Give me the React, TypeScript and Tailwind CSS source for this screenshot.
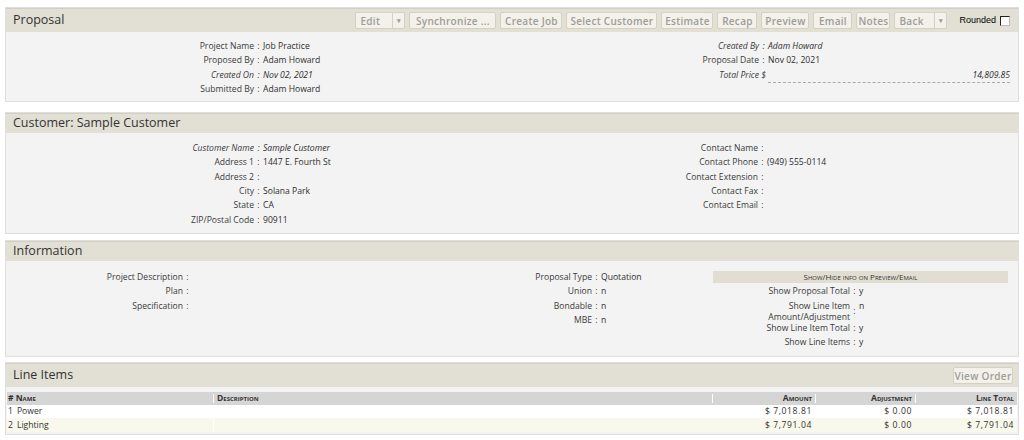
import React from "react";

type Row = { label: string; value?: string; italic?: boolean };

function Field({
  row,
  labelClass,
  rowClass = "h-[14.5px]",
}: {
  row: Row;
  labelClass: string;
  rowClass?: string;
}) {
  return (
    <div className={`flex items-center ${rowClass} ${row.italic ? "italic" : ""}`}>
      <span className={`shrink-0 text-right text-[#3a3a3a] ${labelClass}`}>{row.label}</span>
      <span className="w-[9px] shrink-0 text-center text-[#3a3a3a]">:</span>
      <span className="text-[#2e2e2e]">{row.value}</span>
    </div>
  );
}

function Btn({ label, w, arrow }: { label: string; w: string; arrow?: boolean }) {
  return (
    <div
      className={`flex h-[17px] shrink-0 items-center rounded-[2px] border border-[#d4d1c3] bg-[#f3f1e9] text-[10px] font-semibold tracking-[0.3px] text-[#9d9d99] ${w}`}
    >
      {arrow ? (
        <>
          <span className="flex-1 pl-[4px]">{label}</span>
          <span className="flex h-full w-[12px] items-center justify-center border-l border-[#d4d1c3] text-[7px]">
            ▾
          </span>
        </>
      ) : (
        <span className="w-full text-center">{label}</span>
      )}
    </div>
  );
}

function Panel({
  title,
  headerClass,
  right,
  children,
  className = "",
}: {
  title: string;
  headerClass: string;
  right?: React.ReactNode;
  children: React.ReactNode;
  className?: string;
}) {
  return (
    <div className={`mx-[5px] border border-[#dedede] bg-[#f3f3f3] ${className}`}>
      <div className={`flex items-center border-t border-[#d2d0c4] bg-[#e2e0d4] pl-[7px] ${headerClass}`}>
        <span className="text-[12.5px] text-[#333]">{title}</span>
        {right}
      </div>
      {children}
    </div>
  );
}

export default function App() {
  const proposalLeft: Row[] = [
    { label: "Project Name", value: "Job Practice" },
    { label: "Proposed By", value: "Adam Howard" },
    { label: "Created On", value: "Nov 02, 2021", italic: true },
    { label: "Submitted By", value: "Adam Howard" },
  ];
  const proposalRight: Row[] = [
    { label: "Created By", value: "Adam Howard", italic: true },
    { label: "Proposal Date", value: "Nov 02, 2021" },
  ];
  const customerLeft: Row[] = [
    { label: "Customer Name", value: "Sample Customer", italic: true },
    { label: "Address 1", value: "1447 E. Fourth St" },
    { label: "Address 2", value: "" },
    { label: "City", value: "Solana Park" },
    { label: "State", value: "CA" },
    { label: "ZIP/Postal Code", value: "90911" },
  ];
  const customerRight: Row[] = [
    { label: "Contact Name", value: "" },
    { label: "Contact Phone", value: "(949) 555-0114" },
    { label: "Contact Extension", value: "" },
    { label: "Contact Fax", value: "" },
    { label: "Contact Email", value: "" },
  ];
  const infoLeft: Row[] = [
    { label: "Project Description" },
    { label: "Plan" },
    { label: "Specification" },
  ];
  const infoMid: Row[] = [
    { label: "Proposal Type", value: "Quotation" },
    { label: "Union", value: "n" },
    { label: "Bondable", value: "n" },
    { label: "MBE", value: "n" },
  ];
  const items = [
    { n: 1, name: "Power", amount: "$ 7,018.81", adj: "$ 0.00", total: "$ 7,018.81" },
    { n: 2, name: "Lighting", amount: "$ 7,791.04", adj: "$ 0.00", total: "$ 7,791.04" },
  ];

  return (
    <div className="h-[440px] w-[1024px] overflow-hidden bg-white pt-[7px] font-['Open_Sans',sans-serif] text-[8.6px] leading-none">
      <Panel
        title="Proposal"
        headerClass="h-[24px]"
        right={
          <div className="ml-auto flex items-center gap-[4px] pr-[8px]">
            <Btn label="Edit" w="w-[50px]" arrow />
            <Btn label="Synchronize ..." w="w-[87px]" />
            <Btn label="Create Job" w="w-[62px]" />
            <Btn label="Select Customer" w="w-[91px]" />
            <Btn label="Estimate" w="w-[52px]" />
            <Btn label="Recap" w="w-[40px]" />
            <Btn label="Preview" w="w-[48px]" />
            <Btn label="Email" w="w-[39px]" />
            <Btn label="Notes" w="w-[34px]" />
            <Btn label="Back" w="w-[53px]" arrow />
            <span className="ml-[8px] font-['Liberation_Sans',sans-serif] text-[9px] text-black">Rounded</span>
            <span className="h-[10px] w-[10px] border border-t-[#222] border-l-[#222] border-r-[#bbb] border-b-[#bbb] bg-white" />
          </div>
        }
      >
        <div className="flex h-[69px] pt-[7px]">
          <div className="w-[500px] shrink-0">
            {proposalLeft.map((r) => (
              <Field key={r.label} row={r} labelClass="w-[248px]" />
            ))}
          </div>
          <div className="flex-1">
            {proposalRight.map((r) => (
              <Field key={r.label} row={r} labelClass="w-[253px]" />
            ))}
            <div className="flex h-[14.5px] items-center italic">
              <span className="w-[253px] shrink-0 text-right text-[#3a3a3a]">Total Price</span>
              <span className="w-[9px] shrink-0 text-center text-[#3a3a3a]">$</span>
              <span className="mr-[8px] mt-[3px] flex-1 border-b border-dashed border-[#aaa] pb-[2px] text-right text-[#2e2e2e]">
                14,809.85
              </span>
            </div>
          </div>
        </div>
      </Panel>

      <Panel title="Customer: Sample Customer" headerClass="h-[20px]" className="mt-[10px]">
        <div className="flex h-[100px] pt-[8px]">
          <div className="w-[500px] shrink-0">
            {customerLeft.map((r) => (
              <Field key={r.label} row={r} labelClass="w-[248px]" rowClass="h-[14.4px]" />
            ))}
          </div>
          <div className="flex-1">
            {customerRight.map((r) => (
              <Field key={r.label} row={r} labelClass="w-[252px]" rowClass="h-[14.4px]" />
            ))}
          </div>
        </div>
      </Panel>

      <Panel title="Information" headerClass="h-[20px]" className="mt-[6px]">
        <div className="flex h-[95px] pt-[9px]">
          <div className="w-[394px] shrink-0">
            {infoLeft.map((r) => (
              <Field key={r.label} row={r} labelClass="w-[177px]" />
            ))}
          </div>
          <div className="w-[307px] shrink-0">
            {infoMid.map((r) => (
              <Field key={r.label} row={r} labelClass="w-[192px]" />
            ))}
          </div>
          <div className="ml-[6px] mt-[1px] w-[295px]">
            <div className="mb-[1px] flex h-[12px] items-center justify-center bg-[#e1ddd0] text-[8px] text-[#333] [font-variant:small-caps]">
              Show/Hide info on Preview/Email
            </div>
            <Field row={{ label: "Show Proposal Total", value: "y" }} labelClass="w-[137px]" />
            <div className="flex h-[23px] items-start pt-[2px]">
              <span className="w-[137px] shrink-0 text-right leading-[11px] text-[#3a3a3a]">
                Show Line Item
                <br />
                Amount/Adjustment
              </span>
              <span className="w-[9px] shrink-0 self-center text-center text-[#3a3a3a]">:</span>
              <span className="leading-[11px] text-[#2e2e2e]">n</span>
            </div>
            <Field row={{ label: "Show Line Item Total", value: "y" }} labelClass="w-[137px]" rowClass="h-[14px]" />
            <Field row={{ label: "Show Line Items", value: "y" }} labelClass="w-[137px]" rowClass="h-[14px]" />
          </div>
        </div>
      </Panel>

      <Panel
        title="Line Items"
        headerClass="h-[24px]"
        className="mt-[5px]"
        right={
          <div className="ml-auto pr-[5px]">
            <Btn label="View Order" w="w-[60px]" />
          </div>
        }
      >
        <div className="px-[1px] pb-[2px] pt-[5px]">
          <div className="flex h-[13px] items-center bg-[#d5d5d5] text-[8.5px] font-bold text-[#333] [font-variant:small-caps]">
            <div className="w-[206px] pl-[1px]"># Name</div>
            <div className="w-[499px] border-l border-white pl-[3px]">Description</div>
            <div className="w-[103px] border-l border-white pr-[3px] text-right">Amount</div>
            <div className="w-[100px] border-l border-white pr-[3px] text-right">Adjustment</div>
            <div className="flex-1 border-l border-white pr-[3px] text-right">Line Total</div>
          </div>
          {items.map((it, i) => (
            <div
              key={it.n}
              className={`flex items-center text-[#333] ${i === 0 ? "h-[13px] bg-white" : "h-[14px] bg-[#f8f8ec]"}`}
            >
              <div className="w-[206px] pl-[1px]">
                {it.n}
                <span className="ml-[4px]">{it.name}</span>
              </div>
              <div className="h-full w-[499px] border-l border-white" />
              <div className="w-[103px] pr-[3px] text-right tracking-[0.6px]">{it.amount}</div>
              <div className="w-[100px] pr-[3px] text-right tracking-[0.6px]">{it.adj}</div>
              <div className="flex-1 pr-[3px] text-right tracking-[0.6px]">{it.total}</div>
            </div>
          ))}
        </div>
      </Panel>
    </div>
  );
}
